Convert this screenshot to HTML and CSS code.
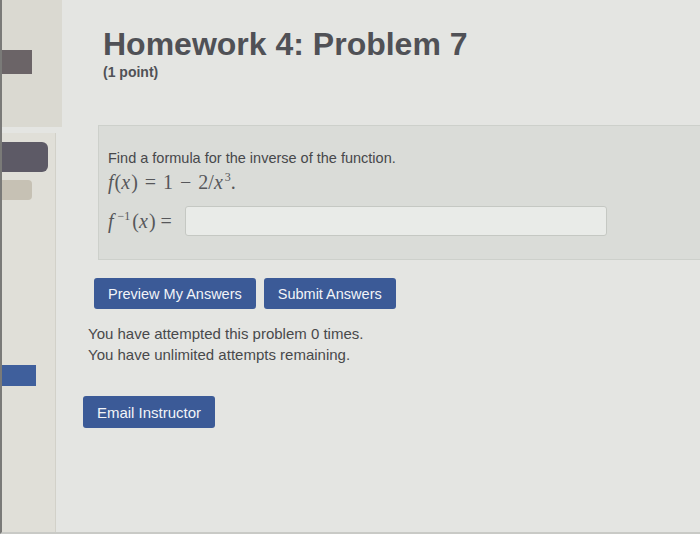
FILE: index.html
```html
<!DOCTYPE html>
<html lang="en">
<head>
<meta charset="utf-8">
<title>Homework 4: Problem 7</title>
<link rel="stylesheet" href="styles.css">
</head>
<body>
<div class="screen">
  <aside class="side">
    <div class="side-top"><div class="side-tab"></div></div>
    <div class="side-panel">
      <div class="side-btn dark"></div>
      <div class="side-btn tan"></div>
      <div class="side-btn blue"></div>
    </div>
  </aside>
  <main class="main">
    <header class="head">
      <h1 class="title">Homework 4: Problem 7</h1>
      <p class="pts">(1 point)</p>
    </header>
    <section class="problem">
      <p class="prompt">Find a formula for the inverse of the function.</p>
      <p class="math formula"><i>f</i>(<i>x</i>)<span class="op">=</span>1<span class="op">−</span>2/<i>x</i><sup>3</sup>.</p>
      <div class="answer">
        <span class="math label"><i>f</i><sup>−1</sup>(<i>x</i>)<span class="op">=</span></span>
        <input class="field" type="text" aria-label="answer">
      </div>
    </section>
    <div class="actions">
      <button class="btn">Preview My Answers</button>
      <button class="btn">Submit Answers</button>
    </div>
    <div class="attempts">
      <p>You have attempted this problem 0 times.</p>
      <p>You have unlimited attempts remaining.</p>
    </div>
    <button class="btn email">Email Instructor</button>
  </main>
</div>
</body>
</html>
```

FILE: styles.css
```css
html, body {
  margin: 0;
  padding: 0;
}
body {
  background: #e4e5e2;
  font-family: "Liberation Sans", Arial, sans-serif;
  color: #4a4a4c;
}
.screen {
  display: flex;
  width: 700px;
  height: 534px;
  overflow: hidden;
  border-left: 2px solid #7a7a78;
  box-sizing: border-box;
  border-bottom: 2px solid #c9cac6;
}
.side {
  width: 60px;
  flex: none;
  display: flex;
  flex-direction: column;
}
.side-top {
  height: 127px;
  background: #dad9d1;
  padding-top: 50px;
  box-sizing: border-box;
}
.side-tab {
  width: 30px;
  height: 24px;
  background: #6b6467;
}
.side-panel {
  margin-top: 6px;
  width: 53px;
  flex: 1;
  background: #e0dfd8;
  border-right: 1px solid #d2d1c9;
  padding-top: 9px;
  display: flex;
  flex-direction: column;
}
.side-btn.dark {
  width: 46px;
  height: 30px;
  background: #5d5a66;
  border-radius: 0 6px 6px 0;
}
.side-btn.tan {
  margin-top: 8px;
  width: 30px;
  height: 20px;
  background: #c6c1b4;
  border-radius: 0 4px 4px 0;
}
.side-btn.blue {
  margin-top: 165px;
  width: 34px;
  height: 21px;
  background: #3f5f9c;
}
.main {
  flex: 1;
  display: flex;
  flex-direction: column;
  align-items: flex-start;
}
.head {
  margin-left: 41px;
}
.title {
  margin: 26px 0 0;
  font-size: 32px;
  line-height: 36px;
  font-weight: bold;
  color: #505156;
}
.pts {
  margin: 1px 0 0;
  font-size: 14px;
  line-height: 18px;
  font-weight: bold;
  color: #505156;
}
.problem {
  margin-top: 44px;
  margin-left: 36px;
  align-self: stretch;
  background: #dadcd8;
  border: 1px solid #cdd0cb;
  border-right: none;
  padding: 22px 0 23px 9px;
}
.prompt {
  margin: 0;
  font-size: 14.5px;
  line-height: 20px;
  color: #47484b;
}
.math {
  font-family: "Liberation Serif", "Times New Roman", serif;
  color: #56575a;
}
.math i {
  font-style: italic;
  margin-right: 1px;
}
.math sup {
  font-size: 12px;
  line-height: 0;
  margin-left: 1px;
}
.op {
  margin: 0 7px;
}
.formula {
  margin: 3px 0 0;
  font-size: 20px;
  line-height: 22px;
}
.answer {
  margin-top: 13px;
  display: flex;
  align-items: center;
}
.label {
  font-size: 20px;
  width: 71px;
  white-space: nowrap;
}
.label .op {
  margin: 0 5px;
}
.label sup {
  margin-left: 3px;
  margin-right: 2px;
}
.field {
  margin-left: 6px;
  width: 422px;
  height: 30px;
  box-sizing: border-box;
  background: #e9ebe8;
  border: 1px solid #c5c8c3;
  border-radius: 3px;
  padding: 0 6px;
}
.actions {
  margin-top: 18px;
  margin-left: 32px;
  display: flex;
  gap: 8px;
}
.btn {
  height: 31px;
  padding: 0 14px;
  background: #3b5a97;
  color: #f2f4f8;
  border: none;
  border-radius: 3px;
  font-family: "Liberation Sans", Arial, sans-serif;
  font-size: 14.5px;
}
.attempts {
  margin-top: 14px;
  margin-left: 26px;
  font-size: 15px;
  line-height: 21px;
  color: #48494b;
}
.attempts p {
  margin: 0;
}
.email {
  margin-top: 31px;
  margin-left: 21px;
  height: 32px;
  width: 132px;
  padding: 0;
  font-size: 15px;
}
```
